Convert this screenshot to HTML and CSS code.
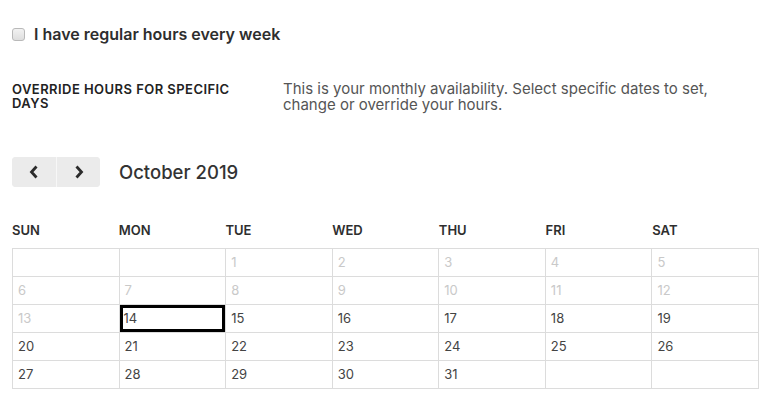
FILE: index.html
```html
<!DOCTYPE html>
<html lang="en">
<head>
<meta charset="utf-8">
<title>Availability</title>
<link rel="stylesheet" href="styles.css">
</head>
<body>
<div class="page">
  <label class="regular">
    <input type="checkbox" class="box">
    <span>I have regular hours every week</span>
  </label>

  <section class="override">
    <h2 class="override-title">OVERRIDE HOURS FOR SPECIFIC DAYS</h2>
    <p class="override-desc">This is your monthly availability. Select specific dates to set, change or override your hours.</p>
  </section>

  <div class="nav">
    <div class="nav-btns">
      <button class="nav-btn" aria-label="Previous month">
        <svg width="10" height="14" viewBox="0 0 10 14"><path d="M7.5 1.5 L2.5 7 L7.5 12.5" fill="none" stroke="#2b2b2b" stroke-width="2.8" stroke-linejoin="miter"/></svg>
      </button>
      <button class="nav-btn" aria-label="Next month">
        <svg width="10" height="14" viewBox="0 0 10 14"><path d="M2.5 1.5 L7.5 7 L2.5 12.5" fill="none" stroke="#2b2b2b" stroke-width="2.8" stroke-linejoin="miter"/></svg>
      </button>
    </div>
    <div class="month">October 2019</div>
  </div>

  <div class="weekdays">
    <div>SUN</div><div>MON</div><div>TUE</div><div>WED</div><div>THU</div><div>FRI</div><div>SAT</div>
  </div>

  <div class="grid">
    <div class="cell"></div>
    <div class="cell"></div>
    <div class="cell past">1</div>
    <div class="cell past">2</div>
    <div class="cell past">3</div>
    <div class="cell past">4</div>
    <div class="cell past">5</div>

    <div class="cell past">6</div>
    <div class="cell past">7</div>
    <div class="cell past">8</div>
    <div class="cell past">9</div>
    <div class="cell past">10</div>
    <div class="cell past">11</div>
    <div class="cell past">12</div>

    <div class="cell past">13</div>
    <div class="cell selected">14</div>
    <div class="cell">15</div>
    <div class="cell">16</div>
    <div class="cell">17</div>
    <div class="cell">18</div>
    <div class="cell">19</div>

    <div class="cell">20</div>
    <div class="cell">21</div>
    <div class="cell">22</div>
    <div class="cell">23</div>
    <div class="cell">24</div>
    <div class="cell">25</div>
    <div class="cell">26</div>

    <div class="cell">27</div>
    <div class="cell">28</div>
    <div class="cell">29</div>
    <div class="cell">30</div>
    <div class="cell">31</div>
    <div class="cell"></div>
    <div class="cell"></div>
  </div>
</div>
</body>
</html>
```

FILE: styles.css
```css
* { box-sizing: border-box; }

html, body {
  margin: 0;
  padding: 0;
  background: #fff;
}

body {
  font-family: Inter, "Open Sans", "Liberation Sans", sans-serif;
  color: #333;
}

.page {
  padding: 0 9px 0 12px;
}

.regular {
  display: flex;
  align-items: center;
  gap: 9px;
  margin-top: 24px;
  height: 20px;
  font-size: 16px;
  font-weight: 600;
  color: #2e2e2e;
  line-height: 20px;
}

.box {
  appearance: none;
  -webkit-appearance: none;
  margin: 0;
  width: 13px;
  height: 13px;
  border: 1px solid #b9b9b9;
  border-radius: 3px;
  background: linear-gradient(#f2f2f2, #dedede);
}

.override {
  display: grid;
  grid-template-columns: 250px 460px;
  column-gap: 21px;
  margin-top: 37px;
  align-items: start;
}

.override-title {
  margin: 0;
  font-size: 13px;
  letter-spacing: 0.45px;
  line-height: 14px;
  font-weight: 600;
  color: #222;
  padding-top: 1px;
}

.override-desc {
  margin: 0;
  font-size: 15px;
  line-height: 16px;
  color: #555;
}

.nav {
  display: flex;
  align-items: center;
  gap: 19px;
  margin-top: 44px;
  height: 30px;
}

.nav-btns {
  display: flex;
  height: 30px;
  border-radius: 4px;
  overflow: hidden;
  background: #ebebeb;
}

.nav-btn {
  width: 44px;
  height: 30px;
  border: 0;
  padding: 0;
  margin: 0;
  background: #ebebeb;
  display: flex;
  align-items: center;
  justify-content: center;
}

.nav-btn + .nav-btn {
  border-left: 1px solid #f7f7f7;
}

.month {
  font-size: 18.5px;
  font-weight: 500;
  color: #333;
  line-height: 24px;
}

.weekdays {
  display: grid;
  grid-template-columns: repeat(7, 1fr);
  width: 747px;
  margin-top: 35px;
  font-size: 13px;
  line-height: 16px;
  font-weight: 600;
  color: #2e2e2e;
}

.grid {
  display: grid;
  grid-template-columns: repeat(7, 1fr);
  width: 747px;
  margin-top: 10px;
  border-top: 1px solid #dcdcdc;
  border-left: 1px solid #dcdcdc;
}

.cell {
  height: 28px;
  border-right: 1px solid #dcdcdc;
  border-bottom: 1px solid #dcdcdc;
  padding-left: 5px;
  font-size: 13px;
  line-height: 26px;
  color: #444;
}

.cell.past {
  color: #c9c9c9;
}

.cell.selected {
  box-shadow: inset 0 0 0 3px #000;
  padding-left: 4px;
}
```
